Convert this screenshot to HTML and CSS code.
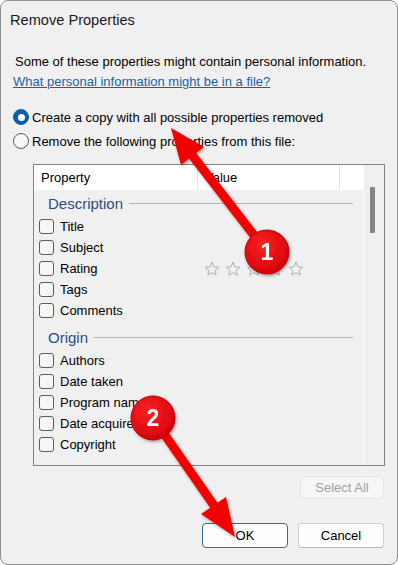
FILE: index.html
```html
<!DOCTYPE html>
<html>
<head>
<meta charset="utf-8">
<link rel="stylesheet" href="styles.css">
</head>
<body>
<div class="dialog">
  <div class="titlebar">Remove Properties</div>
  <div class="content">
    <p class="intro">Some of these properties might contain personal information.</p>
    <a class="link" href="#">What personal information might be in a file?</a>
    <div class="options">
      <div class="radio-row"><span class="radio checked"></span><span>Create a copy with all possible properties removed</span></div>
      <div class="radio-row"><span class="radio"></span><span>Remove the following properties from this file:</span></div>
    </div>
    <div class="listbox">
      <div class="list-main">
        <div class="list-header">
          <div class="hcol hprop">Property</div>
          <div class="hcol hval">Value</div>
          <div class="hcol hextra"></div>
        </div>
        <div class="group">
          <div class="group-head"><span>Description</span><span class="rule"></span></div>
          <div class="item"><div class="prop"><span class="check"></span>Title</div></div>
          <div class="item"><div class="prop"><span class="check"></span>Subject</div></div>
          <div class="item"><div class="prop"><span class="check"></span>Rating</div>
            <div class="stars">
              <svg class="star" viewBox="0 0 16 16"><path d="M8 1.2l1.9 4.6 4.9.4-3.7 3.2 1.1 4.8L8 11.6l-4.2 2.6 1.1-4.8L1.2 6.2l4.9-.4z"/></svg>
              <svg class="star" viewBox="0 0 16 16"><path d="M8 1.2l1.9 4.6 4.9.4-3.7 3.2 1.1 4.8L8 11.6l-4.2 2.6 1.1-4.8L1.2 6.2l4.9-.4z"/></svg>
              <svg class="star" viewBox="0 0 16 16"><path d="M8 1.2l1.9 4.6 4.9.4-3.7 3.2 1.1 4.8L8 11.6l-4.2 2.6 1.1-4.8L1.2 6.2l4.9-.4z"/></svg>
              <svg class="star" viewBox="0 0 16 16"><path d="M8 1.2l1.9 4.6 4.9.4-3.7 3.2 1.1 4.8L8 11.6l-4.2 2.6 1.1-4.8L1.2 6.2l4.9-.4z"/></svg>
              <svg class="star" viewBox="0 0 16 16"><path d="M8 1.2l1.9 4.6 4.9.4-3.7 3.2 1.1 4.8L8 11.6l-4.2 2.6 1.1-4.8L1.2 6.2l4.9-.4z"/></svg>
            </div>
          </div>
          <div class="item"><div class="prop"><span class="check"></span>Tags</div></div>
          <div class="item"><div class="prop"><span class="check"></span>Comments</div></div>
        </div>
        <div class="group group-next">
          <div class="group-head"><span>Origin</span><span class="rule"></span></div>
          <div class="item"><div class="prop"><span class="check"></span>Authors</div></div>
          <div class="item"><div class="prop"><span class="check"></span>Date taken</div></div>
          <div class="item"><div class="prop"><span class="check"></span>Program name</div></div>
          <div class="item"><div class="prop"><span class="check"></span>Date acquired</div></div>
          <div class="item"><div class="prop"><span class="check"></span>Copyright</div></div>
        </div>
      </div>
      <div class="scrollbar"><div class="thumb"></div></div>
    </div>
    <div class="row-select"><button class="btn btn-disabled">Select All</button></div>
    <div class="row-actions"><button class="btn btn-default">OK</button><button class="btn">Cancel</button></div>
  </div>
  <svg class="annotations" width="398" height="565" viewBox="0 0 398 565">
    <defs>
      <filter id="sh" x="-20%" y="-20%" width="140%" height="140%">
        <feDropShadow dx="1" dy="1.5" stdDeviation="1.5" flood-color="#000" flood-opacity="0.35"/>
      </filter>
      <radialGradient id="rg" cx="0.4" cy="0.35" r="0.7">
        <stop offset="0" stop-color="#ff2020"/>
        <stop offset="1" stop-color="#d0000c"/>
      </radialGradient>
    </defs>
    <g filter="url(#sh)">
      <line x1="192" y1="155" x2="260" y2="243" stroke="#f20000" stroke-width="9"/>
      <polygon points="171,128 181,165 204,147" fill="#f20000"/>
      <circle cx="267" cy="252" r="22" fill="url(#rg)" stroke="#b80008" stroke-width="1"/>
      <text class="num" x="267" y="260" text-anchor="middle">1</text>
    </g>
    <g filter="url(#sh)">
      <line x1="158" y1="425" x2="215" y2="507" stroke="#f20000" stroke-width="9"/>
      <polygon points="235,537 226,497 201,514" fill="#f20000"/>
      <circle cx="153" cy="418" r="22" fill="url(#rg)" stroke="#b80008" stroke-width="1"/>
      <text class="num" x="153" y="426" text-anchor="middle">2</text>
    </g>
  </svg>
</div>
</body>
</html>
```
FILE: styles.css
```css
html, body {
  margin: 0;
  padding: 0;
  background: #ffffff;
}
.dialog {
  position: relative;
  width: 398px;
  height: 565px;
  box-sizing: border-box;
  border: 1px solid #8e8e8e;
  border-radius: 8px;
  background: #f0f0f0;
  overflow: hidden;
  font-family: "Liberation Sans", Arial, sans-serif;
  font-size: 13px;
  color: #000;
}
.titlebar {
  height: 51px;
  box-sizing: border-box;
  padding: 11px 0 0 9px;
  font-size: 14.6px;
  color: #1a1a1a;
}
.content {
  padding: 0 13px 0 12px;
}
.intro {
  margin: 0;
  line-height: 20px;
  padding-left: 2px;
}
.link {
  display: block;
  line-height: 20px;
  color: #1f5f9f;
  text-decoration: underline;
}
.options {
  margin-top: 13px;
}
.radio-row {
  height: 24px;
  display: flex;
  align-items: center;
  gap: 3px;
}
.radio {
  width: 16px;
  height: 16px;
  box-sizing: border-box;
  border: 1px solid #5a5a5a;
  border-radius: 50%;
  background: #f8f8f8;
  display: flex;
  align-items: center;
  justify-content: center;
}
.radio.checked {
  background: #0b5fa8;
  border-color: #0b5fa8;
}
.radio.checked::after {
  content: "";
  width: 7px;
  height: 7px;
  border-radius: 50%;
  background: #fff;
}
.listbox {
  margin-top: 11px;
  margin-left: 20px;
  width: 352px;
  height: 302px;
  box-sizing: border-box;
  border: 1px solid #838383;
  display: flex;
}
.list-main {
  width: 329px;
  flex: none;
}
.list-header {
  height: 25px;
  background: #ffffff;
  display: flex;
  line-height: 25px;
}
.hcol {
  box-sizing: border-box;
  padding-left: 7px;
}
.hprop {
  width: 164px;
  border-right: 1px solid #e3e3e3;
}
.hval {
  width: 142px;
  border-right: 1px solid #e3e3e3;
}
.hextra {
  flex: 1;
}
.group-head {
  height: 26px;
  display: flex;
  align-items: center;
  padding-left: 14px;
  padding-right: 10px;
  font-size: 15px;
  color: #2d4c82;
}
.group-next {
  margin-top: 3px;
}
.rule {
  flex: 1;
  height: 1px;
  background: #a9b8c8;
  margin-left: 6px;
}
.item {
  height: 21px;
  display: flex;
  align-items: center;
}
.prop {
  width: 164px;
  display: flex;
  align-items: center;
}
.check {
  width: 15px;
  height: 15px;
  box-sizing: border-box;
  border: 1px solid #5c5c5c;
  border-radius: 3px;
  background: #f6f6f6;
  margin-left: 5px;
  margin-right: 6px;
}
.stars {
  display: flex;
  gap: 5px;
  padding-left: 6px;
}
.star {
  width: 16px;
  height: 16px;
  fill: none;
  stroke: #b0b0b0;
  stroke-width: 1;
}
.scrollbar {
  flex: 1;
  border-left: 1px solid #fafafa;
}
.thumb {
  margin-top: 22px;
  margin-left: 6px;
  width: 5px;
  height: 46px;
  background: #858585;
  border-radius: 1px;
}
.row-select {
  margin-top: 10px;
  display: flex;
  justify-content: flex-end;
}
.row-actions {
  margin-top: 24px;
  display: flex;
  justify-content: flex-end;
  gap: 10px;
}
.btn {
  font-family: "Liberation Sans", Arial, sans-serif;
  font-size: 13px;
  width: 86px;
  height: 25px;
  box-sizing: border-box;
  border: 1px solid #cfcfcf;
  border-bottom-color: #b8b8b8;
  border-radius: 4px;
  background: #fdfdfd;
  color: #000;
  padding: 0;
}
.btn-disabled {
  width: 84px;
  height: 23px;
  background: #f6f6f6;
  border-color: #e4e4e4;
  color: #a0a0a0;
}
.btn-default {
  border-color: #3a6a98;
}
.annotations {
  position: absolute;
  top: -1px;
  left: -1px;
  pointer-events: none;
}
.num {
  font-family: "Liberation Sans", Arial, sans-serif;
  font-weight: bold;
  font-size: 23px;
  fill: #ffffff;
}
```
